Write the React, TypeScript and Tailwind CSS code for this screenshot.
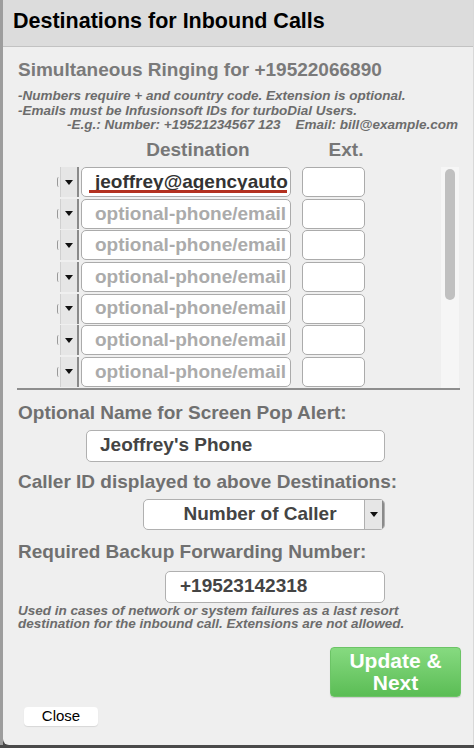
import React from "react";

const Arrow = () => (
  <svg width="8" height="5" viewBox="0 0 8 5">
    <path d="M0 0 L8 0 L4 5 Z" fill="#111" />
  </svg>
);

function DestRow({ value }: { value?: string }) {
  return (
    <div className="flex h-[32.5px] items-center">
      <div className="w-[2px] h-[10px] ml-[-3px] mr-[1px] rounded-l-full border-l border-[#999]" />
      <div className="flex h-[30px] w-[19px] items-center justify-center bg-[#e6e6e6] border-r-2 border-[#8a8a8a] border-l border-l-[#d0d0d0]">
        <Arrow />
      </div>
      <div className="relative ml-[2px] flex h-[30px] w-[210px] items-center overflow-hidden rounded-[5px] border-[1.5px] border-[#ababab] bg-white pl-[13px]">
        {value ? (
          <>
            <span className="whitespace-nowrap text-[19px] font-bold text-[#333]">{value}</span>
            <div className="absolute left-[7px] right-[3px] top-[22px] h-[3px] bg-[#b3301f]" />
          </>
        ) : (
          <span className="whitespace-nowrap text-[19px] font-bold text-[#ababab]">optional-phone/email</span>
        )}
      </div>
      <div className="ml-[11px] h-[30px] w-[63px] rounded-[5px] border-[1.5px] border-[#ababab] bg-white" />
    </div>
  );
}

export default function App() {
  return (
    <div className="w-[474px] h-[748px] bg-[#4a4a4a] font-['Liberation_Sans',Arial,sans-serif] overflow-hidden">
      <div className="flex h-[745px]">
        <div className="w-[3px] bg-[#9d9d9d]" />
        <div className="flex-1 flex flex-col bg-[#efefef] rounded-bl-[6px] border-r border-[#d8d8d8]">
          {/* Header */}
          <div className="h-[47px] bg-[#dcdcdc] border-b border-[#c2c2c2] pl-[10px] pt-[8px]">
            <div className="text-[21.5px] leading-[26px] font-bold text-black">Destinations for Inbound Calls</div>
          </div>
          {/* Body */}
          <div className="pl-[15px] pr-[12px]">
            <div className="mt-[12px] text-[19px] leading-[22px] font-bold text-[#7a7a7a]">
              Simultaneous Ringing for +19522066890
            </div>
            <div className="mt-[8px] text-[13.5px] leading-[14.5px] italic font-bold text-[#6c6c6c]">
              <div>-Numbers require + and country code. Extension is optional.</div>
              <div>-Emails must be Infusionsoft IDs for turboDial Users.</div>
              <div className="pl-[49px] whitespace-pre">-E.g.: Number: +19521234567 123    Email: bill@example.com</div>
            </div>
            <div className="mt-[6px] flex text-[19px] leading-[22px] font-bold text-[#777]">
              <div className="w-[128px]" />
              <div className="w-[104px] text-center">Destination</div>
              <div className="w-[78px]" />
              <div className="w-[36px] text-center">Ext.</div>
            </div>
            {/* Rows area */}
            <div className="mt-[6px] flex h-[221px] overflow-hidden">
              <div className="ml-[42px] flex flex-col">
                <DestRow value="jeoffrey@agencyauto" />
                <DestRow />
                <DestRow />
                <DestRow />
                <DestRow />
                <DestRow />
                <DestRow />
              </div>
              <div className="ml-[76px] w-[18px] bg-[#f6f6f6] pt-[2px] flex justify-center">
                <div className="w-[10px] h-[131px] rounded-full bg-[#c0c0c0]" />
              </div>
            </div>
            <div className="h-[2px] w-[443px] ml-[-1px] bg-[#8e8e8e]" />

            <div className="mt-[12px] text-[19px] leading-[22px] font-bold text-[#707070]">
              Optional Name for Screen Pop Alert:
            </div>
            <div className="mt-[6px] ml-[68px] flex h-[32px] w-[299px] items-center rounded-[5px] border-[1.5px] border-[#b0b0b0] bg-white pl-[13px] text-[19px] font-bold text-[#444]">
              Jeoffrey's Phone
            </div>
            <div className="mt-[9px] text-[19px] leading-[22px] font-bold text-[#707070]">
              Caller ID displayed to above Destinations:
            </div>
            <div className="mt-[6px] ml-[125px] flex h-[31px] w-[242px] items-stretch overflow-hidden rounded-[5px] border-[1.5px] border-[#b0b0b0] bg-white">
              <div className="flex-1 flex items-center justify-center pl-[12px] text-[19px] font-bold text-[#444]">
                Number of Caller
              </div>
              <div className="w-[20px] flex items-center justify-center bg-[#e6e6e6] border-l border-[#b0b0b0] border-r-2 border-r-[#8a8a8a]">
                <Arrow />
              </div>
            </div>
            <div className="mt-[11px] text-[19px] leading-[22px] font-bold text-[#707070]">
              Required Backup Forwarding Number:
            </div>
            <div className="mt-[8px] ml-[147px] flex h-[32px] w-[220px] items-center rounded-[5px] border-[1.5px] border-[#b0b0b0] bg-white pl-[14px] text-[19px] font-bold text-[#444]">
              +19523142318
            </div>
            <div className="mt-[1px] text-[13.5px] leading-[13.5px] italic font-bold text-[#6c6c6c]">
              <div>Used in cases of network or system failures as a last resort</div>
              <div>destination for the inbound call. Extensions are not allowed.</div>
            </div>
            <div className="mt-[16px] flex justify-end">
              <div className="flex h-[50px] w-[131px] flex-col items-center justify-center rounded-[4px] border border-[#6cc466] bg-gradient-to-b from-[#86da80] to-[#5bbd55] text-[21px] leading-[22px] font-bold text-white shadow-[0_1px_1px_rgba(0,0,0,0.15)]">
                <div>Update &amp;</div>
                <div>Next</div>
              </div>
            </div>
            <div className="mt-[10px] ml-[6px] flex h-[19px] w-[74px] items-center justify-center rounded-[4px] bg-white text-[15px] text-black shadow-[0_1px_1px_rgba(0,0,0,0.1)]">
              Close
            </div>
          </div>
        </div>
      </div>
    </div>
  );
}
